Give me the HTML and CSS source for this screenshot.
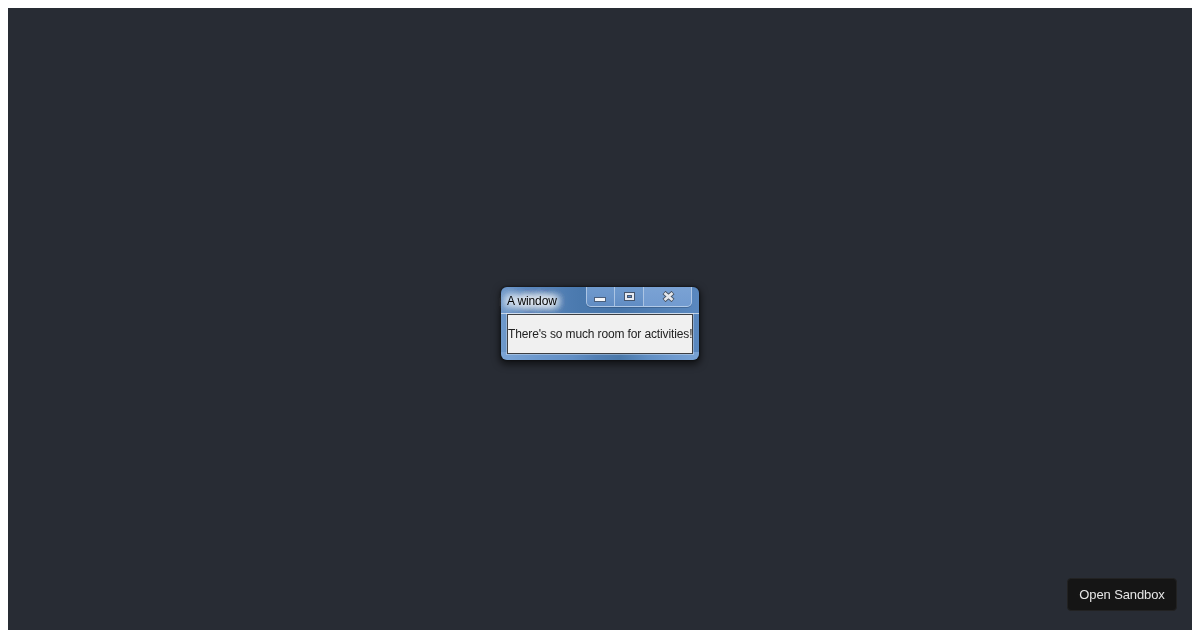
FILE: index.html
```html
<!DOCTYPE html>
<html lang="en">
<head>
  <meta charset="UTF-8" />
  <title>A window</title>
  <link rel="stylesheet" href="styles.css">
</head>
<body>
  <div class="desktop">
    <div class="window">
      <div class="title-bar">
        <div class="title-text">A window</div>
        <div class="title-controls">
          <button class="control min" aria-label="Minimize">
            <svg width="12" height="5" viewBox="0 0 12 5"><rect width="12" height="5" fill="#4a5f7c"/><rect x="1" y="1" width="10" height="3" fill="#f4f6f8"/></svg>
          </button>
          <button class="control max" aria-label="Maximize">
            <svg width="11" height="9" viewBox="0 0 11 9"><rect width="11" height="9" fill="#46566e"/><rect x="1" y="1" width="9" height="7" fill="#e6eaf0"/><rect x="3" y="3" width="5" height="3" fill="#46566e"/><rect x="4" y="4" width="3" height="1" fill="#5f8fcb"/></svg>
          </button>
          <button class="control close" aria-label="Close">
            <svg width="13" height="11" viewBox="0 0 13 11"><path d="M2 1.5L11 9.5M11 1.5L2 9.5" fill="none" stroke="#46505e" stroke-width="4.4"/><path d="M2.5 2L10.5 9M10.5 2L2.5 9" fill="none" stroke="#e4e7ec" stroke-width="2.8"/></svg>
          </button>
        </div>
      </div>
      <div class="window-body">There's so much room for activities!</div>
    </div>
  </div>
  <button class="open-sandbox">Open Sandbox</button>
</body>
</html>
```

FILE: styles.css
```css
body {
  margin: 8px;
  background-color: #fff;
  font-family: "Liberation Sans", Arial, sans-serif;
}

.desktop {
  display: flex;
  align-items: center;
  justify-content: center;
  min-height: 100vh;
  background-color: #282c34;
}

.window {
  width: 198px;
  box-sizing: border-box;
  padding: 0 6px 6px;
  border-radius: 6px;
  background:
    linear-gradient(90deg, #7ca5d6 0, #6b97cc 20%, #628fc5 36%, #527fb4 48%, #4a78a9 60%, #608ec3 74%, #6f9bd0 88%, #78a2d4 100%) 0 100% / 100% 8px no-repeat,
    linear-gradient(180deg, rgba(255, 255, 255, 0.6), rgba(255, 255, 255, 0.6)) 0 26px / 100% 1px no-repeat,
    linear-gradient(90deg, #6f9acc 0, #5a87bd 12%, #4a79ae 40%, #4675aa 60%, #5a88bf 100%);
  box-shadow: 0 3px 7px 2px rgba(0, 0, 0, 0.55), 0 0 2px 1px rgba(0, 0, 0, 0.35);
  will-change: transform;
}

.title-bar {
  display: flex;
  justify-content: space-between;
  height: 27px;
}

.title-text {
  margin-top: 7px;
  font-size: 12px;
  line-height: 14px;
  letter-spacing: -0.12px;
  color: #000;
  text-shadow: 0 0 10px #fff, 0 0 10px #fff, 0 0 10px #fff, 0 0 10px #fff, 0 0 10px #fff, 0 0 10px #fff, 0 0 10px #fff, 0 0 14px #fff;
}

.title-controls {
  display: flex;
  align-items: flex-start;
  margin-right: 1px;
}

.control {
  display: flex;
  align-items: center;
  justify-content: center;
  box-sizing: border-box;
  height: 20px;
  margin: 0;
  padding: 0;
  border: 1px solid rgba(215, 228, 245, 0.6);
  border-top: none;
  border-left: none;
  background: linear-gradient(180deg, #6f9acd 0, #6994c9 55%, #608cc3 100%);
  box-shadow: 0 1px 0 rgba(35, 60, 95, 0.35);
}

.min {
  width: 29px;
  padding: 5px 2px 0 0;
  border-left: 1px solid rgba(215, 228, 245, 0.6);
  border-bottom-left-radius: 5px;
}

.max {
  width: 29px;
}

.close {
  width: 48px;
  padding-left: 2px;
  border-bottom-right-radius: 5px;
  background: linear-gradient(180deg, #7aa2d4 0, #729bd0 100%);
}

.window-body {
  box-sizing: border-box;
  height: 40px;
  border: 1px solid #3c3e42;
  background-color: #f0f0f0;
  box-shadow: 0 0 0 1px rgba(255, 255, 255, 0.3);
  font-size: 12px;
  line-height: 38px;
  letter-spacing: -0.13px;
  color: #222;
  white-space: nowrap;
}

.open-sandbox {
  position: fixed;
  right: 23px;
  bottom: 19px;
  width: 110px;
  height: 33px;
  padding: 0;
  border: 1px solid #222;
  border-radius: 4px;
  background-color: #151515;
  color: #e6e6e6;
  font-family: "Liberation Sans", Arial, sans-serif;
  font-size: 13px;
  letter-spacing: -0.12px;
  will-change: transform;
}
```
